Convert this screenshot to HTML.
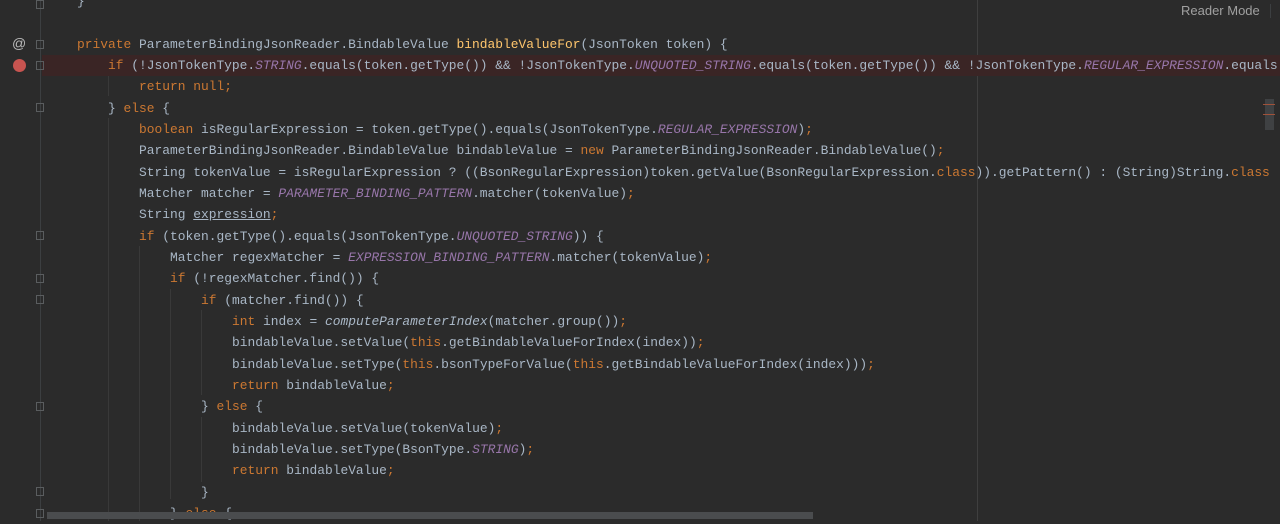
<!DOCTYPE html>
<html><head><meta charset="utf-8"><style>
html,body{margin:0;padding:0;}
body{width:1280px;height:521px;background:#2b2b2b;overflow:hidden;position:relative;font-family:"Liberation Mono",monospace;}
#code{position:absolute;left:0;top:-8.9px;width:1280px;}
.l{height:21.33px;line-height:21.33px;font-size:12.92px;color:#a9b7c6;white-space:pre;position:relative;}
.l span.t{position:absolute;top:0;}
.k{color:#cc7832}
.p{color:#9876aa;font-style:italic}
.m{color:#ffc66d}
.i{font-style:italic}
.u{text-decoration:underline}
.bp{background:#3a2525;}
.guide{position:absolute;width:1px;background:#393939;}
.fold{position:absolute;left:36px;width:8px;height:9px;box-sizing:border-box;border:1px solid #5a5d5f;}
</style></head><body>
<div style="position:absolute;left:40px;top:0;width:1px;height:521px;background:#3c3f41"></div>
<div style="position:absolute;left:977px;top:0;width:1px;height:521px;background:#3f3f3f"></div>
<div id="code">
<div class="l"><span class="t" style="left:77px">}</span></div>
<div class="l"></div>
<div class="l"><span class="t" style="left:77px"><span class="k">private</span> ParameterBindingJsonReader.BindableValue <span class="m">bindableValueFor</span>(JsonToken token) {</span></div>
<div class="l bp" style="margin-left:42px"><span class="t" style="left:66px"><span class="k">if</span> (!JsonTokenType.<span class="p">STRING</span>.equals(token.getType()) &amp;&amp; !JsonTokenType.<span class="p">UNQUOTED_STRING</span>.equals(token.getType()) &amp;&amp; !JsonTokenType.<span class="p">REGULAR_EXPRESSION</span>.equals</span></div>
<div class="l"><span class="t" style="left:139px"><span class="k">return null</span><span class="k">;</span></span></div>
<div class="l"><span class="t" style="left:108px">} <span class="k">else</span> {</span></div>
<div class="l"><span class="t" style="left:139px"><span class="k">boolean</span> isRegularExpression = token.getType().equals(JsonTokenType.<span class="p">REGULAR_EXPRESSION</span>)<span class="k">;</span></span></div>
<div class="l"><span class="t" style="left:139px">ParameterBindingJsonReader.BindableValue bindableValue = <span class="k">new</span> ParameterBindingJsonReader.BindableValue()<span class="k">;</span></span></div>
<div class="l"><span class="t" style="left:139px">String tokenValue = isRegularExpression ? ((BsonRegularExpression)token.getValue(BsonRegularExpression.<span class="k">class</span>)).getPattern() : (String)String.<span class="k">class</span></span></div>
<div class="l"><span class="t" style="left:139px">Matcher matcher = <span class="p">PARAMETER_BINDING_PATTERN</span>.matcher(tokenValue)<span class="k">;</span></span></div>
<div class="l"><span class="t" style="left:139px">String <span class="u">expression</span><span class="k">;</span></span></div>
<div class="l"><span class="t" style="left:139px"><span class="k">if</span> (token.getType().equals(JsonTokenType.<span class="p">UNQUOTED_STRING</span>)) {</span></div>
<div class="l"><span class="t" style="left:170px">Matcher regexMatcher = <span class="p">EXPRESSION_BINDING_PATTERN</span>.matcher(tokenValue)<span class="k">;</span></span></div>
<div class="l"><span class="t" style="left:170px"><span class="k">if</span> (!regexMatcher.find()) {</span></div>
<div class="l"><span class="t" style="left:201px"><span class="k">if</span> (matcher.find()) {</span></div>
<div class="l"><span class="t" style="left:232px"><span class="k">int</span> index = <span class="i">computeParameterIndex</span>(matcher.group())<span class="k">;</span></span></div>
<div class="l"><span class="t" style="left:232px">bindableValue.setValue(<span class="k">this</span>.getBindableValueForIndex(index))<span class="k">;</span></span></div>
<div class="l"><span class="t" style="left:232px">bindableValue.setType(<span class="k">this</span>.bsonTypeForValue(<span class="k">this</span>.getBindableValueForIndex(index)))<span class="k">;</span></span></div>
<div class="l"><span class="t" style="left:232px"><span class="k">return</span> bindableValue<span class="k">;</span></span></div>
<div class="l"><span class="t" style="left:201px">} <span class="k">else</span> {</span></div>
<div class="l"><span class="t" style="left:232px">bindableValue.setValue(tokenValue)<span class="k">;</span></span></div>
<div class="l"><span class="t" style="left:232px">bindableValue.setType(BsonType.<span class="p">STRING</span>)<span class="k">;</span></span></div>
<div class="l"><span class="t" style="left:232px"><span class="k">return</span> bindableValue<span class="k">;</span></span></div>
<div class="l"><span class="t" style="left:201px">}</span></div>
<div class="l"><span class="t" style="left:170px">} <span class="k">else</span> {</span></div>
</div>
<div style="position:absolute;left:12px;top:35px;color:#bbbbbb;font-family:'Liberation Sans',sans-serif;font-size:14px">@</div>
<div style="position:absolute;left:13px;top:59px;width:13px;height:13px;border-radius:50%;background:#c75450"></div>
<div class="fold" style="top:0"></div>
<div class="fold" style="top:40px"></div>
<div class="fold" style="top:61px"></div>
<div class="fold" style="top:103px"></div>
<div class="fold" style="top:231px"></div>
<div class="fold" style="top:274px"></div>
<div class="fold" style="top:295px"></div>
<div class="fold" style="top:402px"></div>
<div class="fold" style="top:487px"></div>
<div class="fold" style="top:509px"></div>
<div class="guide" style="left:108px;top:76px;height:20px"></div>
<div class="guide" style="left:108px;top:118px;height:403px"></div>
<div class="guide" style="left:139px;top:246px;height:275px"></div>
<div class="guide" style="left:170px;top:289px;height:210px"></div>
<div class="guide" style="left:201px;top:310px;height:85px"></div>
<div class="guide" style="left:201px;top:417px;height:65px"></div>
<div style="position:absolute;left:1181px;top:3px;font-family:'Liberation Sans',sans-serif;font-size:13px;color:#a0a0a0">Reader Mode</div>
<div style="position:absolute;left:1270px;top:4px;width:1px;height:14px;background:#3c3f41"></div>
<div style="position:absolute;left:1265px;top:99px;width:9px;height:31px;background:#3f4143"></div>
<div style="position:absolute;left:1263px;top:104px;width:12px;height:1px;background:#a0523a"></div>
<div style="position:absolute;left:1263px;top:114px;width:12px;height:1px;background:#a0523a"></div>
<div style="position:absolute;left:47px;top:512px;width:766px;height:7px;background:#4a4c4e"></div>
</body></html>
